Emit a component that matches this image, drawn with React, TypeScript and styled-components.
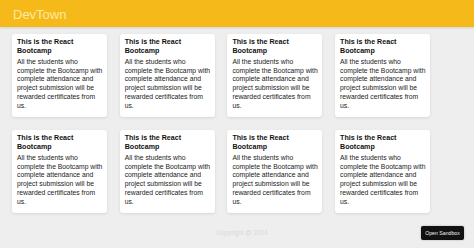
import React from "react";
import styled, { createGlobalStyle } from "styled-components";

const Global = createGlobalStyle`
  html, body { margin: 0; padding: 0; }
  body {
    background: #eeeeee;
    font-family: "Liberation Sans", Arial, Helvetica, sans-serif;
    width: 474px;
    height: 248px;
    overflow: hidden;
  }
`;

const Page = styled.div`
  display: flex;
  flex-direction: column;
  width: 474px;
  height: 248px;
  position: relative;
`;

const Header = styled.header`
  height: 27px;
  background: #f5b919;
  display: flex;
  align-items: center;
  padding: 0 12px 0 13px;
  box-shadow: 0 1px 2px rgba(0, 0, 0, 0.12);
`;

const Logo = styled.h1`
  margin: 0;
  font-size: 13px;
  font-weight: 400;
  color: #fdeaa6;
  padding-top: 1px;
`;

const Grid = styled.main`
  display: grid;
  grid-template-columns: repeat(4, 95px);
  column-gap: 12.7px;
  row-gap: 13px;
  padding: 7px 12px 0;
`;

const Card = styled.div`
  background: #ffffff;
  border-radius: 3px;
  box-shadow: 0 1px 3px rgba(0, 0, 0, 0.1);
  padding: 4px 3px 7px 5px;
  height: 83px;
  box-sizing: border-box;
`;

const Title = styled.h2`
  margin: 0 0 2px;
  font-size: 7.1px;
  line-height: 9px;
  font-weight: 700;
  color: #111;
`;

const Body = styled.p`
  margin: 0;
  font-size: 6.8px;
  line-height: 8.7px;
  color: #222;
`;

const Footer = styled.footer`
  flex: 1;
  display: flex;
  align-items: center;
  justify-content: center;
  padding-left: 10px;
  padding-top: 3px;
`;

const Copy = styled.span`
  font-size: 6.3px;
  color: #d9d9d9;
`;

const SandboxButton = styled.button`
  position: absolute;
  right: 10px;
  bottom: 8px;
  height: 14px;
  width: 43px;
  padding: 0;
  border: none;
  border-radius: 2px;
  background: #111;
  color: #f2f2f2;
  font-family: "Liberation Sans", Arial, sans-serif;
  font-size: 5.2px;
  box-shadow: 0 0 2px rgba(0, 0, 0, 0.3);
`;

const cards = Array.from({ length: 8 }, (_, i) => i);

export default function App() {
  return (
    <>
      <Global />
      <Page>
        <Header>
          <Logo>DevTown</Logo>
        </Header>
        <Grid>
          {cards.map((i) => (
            <Card key={i}>
              <Title>This is the React Bootcamp</Title>
              <Body>
                All the students who complete the Bootcamp with complete attendance and project
                submission will be rewarded certificates from us.
              </Body>
            </Card>
          ))}
        </Grid>
        <Footer>
          <Copy>Copyright @ 2024</Copy>
        </Footer>
        <SandboxButton>Open Sandbox</SandboxButton>
      </Page>
    </>
  );
}
